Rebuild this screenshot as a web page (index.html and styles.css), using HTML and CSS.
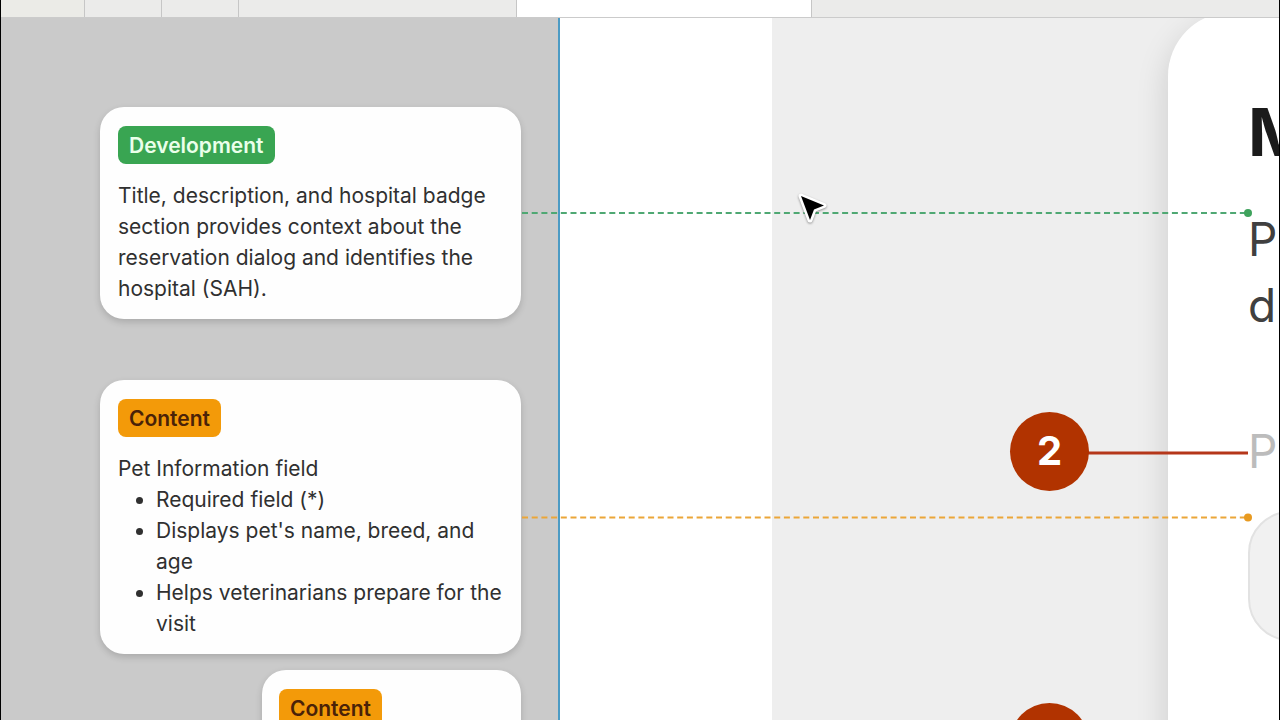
FILE: index.html
```html
<!DOCTYPE html>
<html lang="en">
<head>
<meta charset="utf-8">
<title>Design annotations</title>
<link rel="stylesheet" href="styles.css">
</head>
<body>
<div class="frame">
  <div class="tabs">
    <span class="tab tab-first"></span>
    <span class="tab tab-small"></span>
    <span class="tab tab-small"></span>
    <span class="tab tab-wide"></span>
    <span class="tab tab-active"></span>
    <span class="tab tab-rest"></span>
  </div>
  <main class="canvas">
    <aside class="notes">
      <article class="note">
        <span class="badge badge-dev">Development</span>
        <p class="note-text">Title, description, and hospital badge section provides context about the reservation dialog and identifies the hospital (SAH).</p>
      </article>
      <article class="note note-second">
        <span class="badge badge-content">Content</span>
        <p class="note-text">Pet Information field</p>
        <ul class="note-list">
          <li>Required field (*)</li>
          <li>Displays pet's name, breed, and age</li>
          <li>Helps veterinarians prepare for the visit</li>
        </ul>
      </article>
      <article class="note note-third">
        <span class="badge badge-content">Content</span>
      </article>
    </aside>
    <div class="gutter"></div>
    <section class="stage">
      <div class="dialog">
        <h1 class="dialog-title">M</h1>
        <p class="dialog-text">P<br>d</p>
        <label class="dialog-label" for="pet">P</label>
        <input class="dialog-input" id="pet" type="text">
      </div>
    </section>
    <svg class="connectors" aria-hidden="true">
      <g fill="none" stroke-width="2" stroke-dasharray="6 3.7">
        <path d="M521 195H1246" stroke="#4fa873"/>
        <path d="M521 499.500H1246" stroke="#eba638"/>
      </g>
      <circle cx="1247" cy="195" r="4" fill="#3fa35d"/>
      <circle cx="1247" cy="499.500" r="4" fill="#e89a20"/>
      <path d="M1086 435H1247" stroke="#b5371a" stroke-width="3"/>
    </svg>
    <span class="marker marker-two">2</span>
    <span class="marker marker-next"></span>
    <svg class="cursor" viewBox="0 0 32 34" aria-hidden="true">
      <path d="M4 4L27 13.500L17 17.500L13 28Z" fill="#000" stroke="#fff" stroke-width="5" stroke-linejoin="round" paint-order="stroke"/>
    </svg>
  </main>
</div>
</body>
</html>
```
FILE: styles.css
```css
* { box-sizing: border-box; }

body {
  margin: 0;
  font-family: Inter, "Liberation Sans", sans-serif;
  color: #303030;
}

.frame {
  display: flex;
  flex-direction: column;
  height: 100vh;
  overflow: hidden;
  border-left: 1px solid #000;
  border-right: 1px solid #000;
}

.tabs {
  display: flex;
  flex: 0 0 18px;
  border-bottom: 1px solid #cbcbcb;
  background: #ebebea;
}

.tab { border-right: 1px solid #c6c6c6; }
.tab-first { flex: 0 0 84px; background: #ebebe7; }
.tab-small { flex: 0 0 77px; }
.tab-wide { flex: 0 0 278px; }
.tab-active { flex: 0 0 295px; background: #fff; }
.tab-rest { flex: 1; border-right: 0; }

.canvas {
  position: relative;
  display: flex;
  flex: 1;
  min-height: 0;
  overflow: hidden;
  background: #fff;
}

.notes {
  display: flex;
  flex-direction: column;
  flex: 0 0 559px;
  padding: 89px 37px 0 99px;
  background: #cacaca;
  border-right: 2px solid #4c9bc4;
}

.note {
  flex: none;
  padding: 19px 17px 15px 18px;
  border-radius: 24px;
  background: #fefefe;
  box-shadow: 0 3px 7px rgba(0, 0, 0, 0.16);
}
.note-second { margin-top: 61px; }
.note-third { margin: 16px 0 0 162px; padding-left: 17px; height: 160px; }

.badge {
  display: inline-block;
  padding: 1px 11px 0;
  border-radius: 8px;
  font-size: 21px;
  font-weight: 600;
  line-height: 37px;
  vertical-align: top;
}
.badge-dev { background: #39a552; color: #eaffea; }
.badge-content { background: #f39a09; color: #4a2208; }

.note-text { margin: 16px 0 0; font-size: 21px; line-height: 31px; }
.note-list { margin: 0; padding-left: 38px; font-size: 21px; line-height: 31px; }

.gutter { flex: 0 0 212px; }

.stage { flex: 1; min-width: 0; padding-left: 396px; background: #eee; }

.dialog {
  height: 800px;
  margin-top: -6px;
  padding: 80px 0 0 80px;
  border-radius: 64px 0 0 0;
  background: #fff;
  box-shadow: 0 12px 32px rgba(0, 0, 0, 0.15);
}
.dialog-title { margin: 0; font-size: 66px; font-weight: 700; line-height: 80px; color: #1b1b1b; }
.dialog-text { margin: 34px 0 0; font-size: 46px; line-height: 66px; color: #404040; }
.dialog-label { display: block; margin-top: 80px; font-size: 46px; line-height: 66px; color: #bcbcbc; }
.dialog-input {
  display: block;
  width: 480px;
  height: 130px;
  margin-top: 27px;
  padding: 0 32px;
  border: 2px solid #e2e2e2;
  border-radius: 42px;
  background: #f1f1f1;
  font: inherit;
  font-size: 46px;
}

.connectors { position: absolute; top: 0; left: 0; width: 100%; height: 100%; }

.marker {
  position: absolute;
  left: 1009px;
  width: 79px;
  height: 79px;
  border-radius: 50%;
  background: #b13300;
  color: #fff;
  font-size: 40px;
  font-weight: 700;
  line-height: 77px;
  text-align: center;
}
.marker-two { top: 394px; }
.marker-next { top: 685px; }

.cursor {
  position: absolute;
  top: 174px;
  left: 796px;
  width: 32px;
  height: 34px;
  filter: drop-shadow(0 1px 1px rgba(0, 0, 0, 0.4));
}
```
